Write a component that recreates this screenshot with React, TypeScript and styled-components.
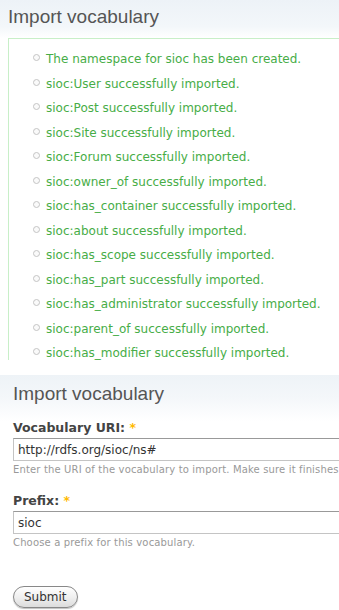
import React from 'react';
import styled, { createGlobalStyle } from 'styled-components';

const GlobalStyle = createGlobalStyle`
  html, body {
    margin: 0;
    padding: 0;
    background: #fff;
  }
  body {
    font-family: "DejaVu Sans", Verdana, sans-serif;
    overflow: hidden;
  }
`;

const Page = styled.div`
  width: 339px;
  height: 610px;
  overflow: hidden;
`;

const TopBand = styled.div`
  background: linear-gradient(to bottom, #edf2f7 0%, #f3f7fa 70%, #ffffff 100%);
  padding: 6px 0 0 8px;
  height: 38px;
  box-sizing: border-box;
`;

const Title = styled.h1`
  margin: 0;
  font-family: "Liberation Sans", Arial, sans-serif;
  font-weight: normal;
  font-size: 19px;
  line-height: 22px;
  color: #555;
`;

const Messages = styled.ul`
  margin: 0 0 0 8px;
  padding: 8px 0 0 37px;
  height: 322px;
  box-sizing: border-box;
  border-top: 1px solid #c8efc8;
  border-left: 1px solid #c8efc8;
  list-style: none;
`;

const Message = styled.li`
  position: relative;
  color: #47ad47;
  font-size: 12px;
  line-height: 24.5px;
  white-space: nowrap;

  &::before {
    content: '';
    position: absolute;
    left: -13px;
    top: 7px;
    width: 5px;
    height: 5px;
    border: 1px solid #c4c4c4;
    border-radius: 50%;
    background: #fafafa;
  }
`;

const FormBand = styled.div`
  margin-top: 15px;
  background: linear-gradient(to bottom, #eef3f7 0%, #f4f7fa 50%, #ffffff 100%);
  padding: 8px 0 0 13px;
  height: 46px;
  box-sizing: border-box;
`;

const Form = styled.form`
  padding: 0 0 0 13px;
`;

const Field = styled.div`
  margin-bottom: 18px;
`;

const Label = styled.label`
  display: block;
  font-weight: bold;
  font-size: 12.5px;
  line-height: 14px;
  color: #444;
  margin-bottom: 3px;
`;

const Required = styled.span`
  color: #ffbb00;
`;

const Input = styled.input`
  display: block;
  width: 340px;
  height: 23px;
  box-sizing: border-box;
  margin: 0;
  padding: 0 4px;
  border: 1px solid #c4c4c4;
  border-top-color: #999;
  font-family: "DejaVu Sans", Verdana, sans-serif;
  font-size: 12px;
  color: #333;
  outline: none;
`;

const Description = styled.div`
  font-size: 10px;
  letter-spacing: 0.15px;
  line-height: 13px;
  color: #999;
  margin-top: 2px;
  white-space: nowrap;
  overflow: hidden;
`;

const SubmitButton = styled.button`
  margin-top: 19px;
  height: 22px;
  padding: 0 10px;
  border: 1px solid #888;
  border-radius: 11px;
  background: linear-gradient(to bottom, #ffffff 0%, #f0f0f0 50%, #dcdcdc 100%);
  box-shadow: 0 1px 1px rgba(0, 0, 0, 0.25);
  font-family: "DejaVu Sans", Verdana, sans-serif;
  font-size: 12px;
  color: #333;
`;

const messages = [
  'The namespace for sioc has been created.',
  'sioc:User successfully imported.',
  'sioc:Post successfully imported.',
  'sioc:Site successfully imported.',
  'sioc:Forum successfully imported.',
  'sioc:owner_of successfully imported.',
  'sioc:has_container successfully imported.',
  'sioc:about successfully imported.',
  'sioc:has_scope successfully imported.',
  'sioc:has_part successfully imported.',
  'sioc:has_administrator successfully imported.',
  'sioc:parent_of successfully imported.',
  'sioc:has_modifier successfully imported.',
];

const App: React.FC = () => {
  return (
    <Page>
      <GlobalStyle />
      <TopBand>
        <Title>Import vocabulary</Title>
      </TopBand>
      <Messages>
        {messages.map(m => (
          <Message key={m}>{m}</Message>
        ))}
      </Messages>
      <FormBand>
        <Title>Import vocabulary</Title>
      </FormBand>
      <Form onSubmit={e => e.preventDefault()}>
        <Field>
          <Label>
            Vocabulary URI: <Required>*</Required>
          </Label>
          <Input defaultValue="http://rdfs.org/sioc/ns#" />
          <Description>
            Enter the URI of the vocabulary to import. Make sure it finishes
          </Description>
        </Field>
        <Field>
          <Label>
            Prefix: <Required>*</Required>
          </Label>
          <Input defaultValue="sioc" />
          <Description>Choose a prefix for this vocabulary.</Description>
        </Field>
        <SubmitButton type="submit">Submit</SubmitButton>
      </Form>
    </Page>
  );
};

export default App;
